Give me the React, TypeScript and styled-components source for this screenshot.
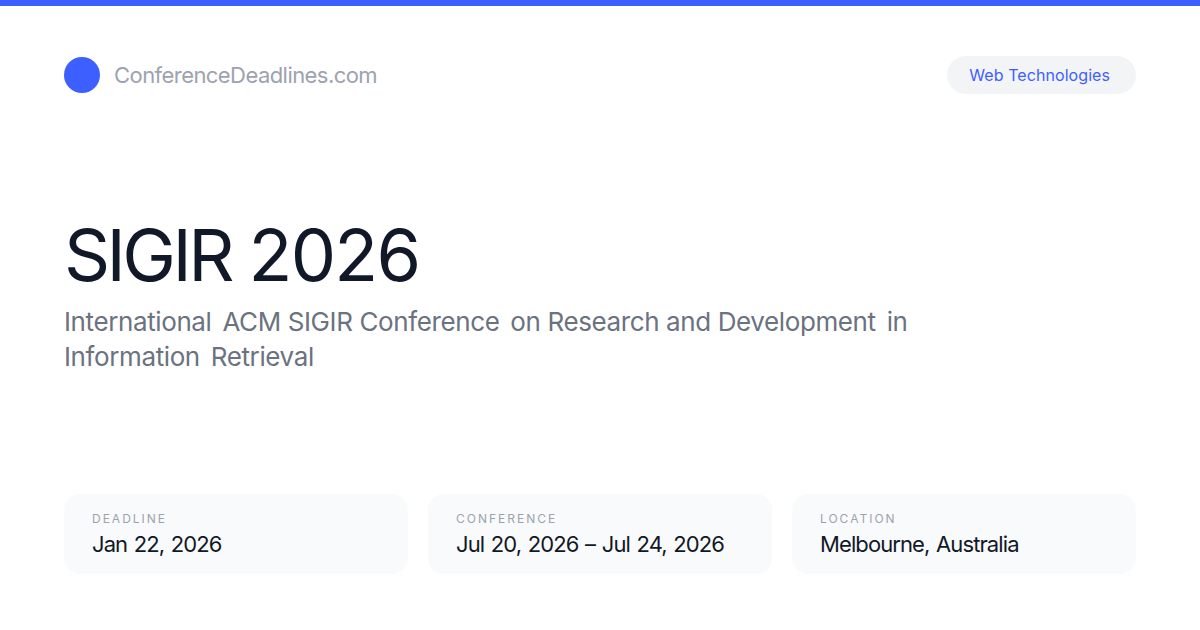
import styled, { createGlobalStyle } from "styled-components";

const GlobalStyle = createGlobalStyle`
  html, body {
    margin: 0;
    padding: 0;
    background: #ffffff;
  }
`;

const Page = styled.div`
  width: 1200px;
  height: 630px;
  box-sizing: border-box;
  overflow: hidden;
  display: flex;
  flex-direction: column;
  border-top: 6px solid #3d5fff;
  padding: 50px 64px 56px;
  font-family: Inter, "Liberation Sans", sans-serif;
`;

const Header = styled.div`
  display: flex;
  align-items: center;
  justify-content: space-between;
`;

const Brand = styled.div`
  display: flex;
  align-items: center;
  gap: 14px;
`;

const Dot = styled.div`
  width: 36px;
  height: 36px;
  border-radius: 50%;
  background: #3d5fff;
`;

const BrandName = styled.span`
  color: #9ca3af;
  font-size: 22px;
  line-height: 38px;
  letter-spacing: -0.56px;
`;

const Tag = styled.span`
  background: #f3f4f6;
  color: #3d5fff;
  font-size: 16px;
  line-height: 38px;
  letter-spacing: 0.07px;
  padding: 0 26px 0 22px;
  border-radius: 19px;
`;

const Main = styled.div`
  flex: 1;
  display: flex;
  flex-direction: column;
  justify-content: center;
`;

const Title = styled.h1`
  margin: 0 0 9px;
  color: #111827;
  font-size: 72px;
  font-weight: 400;
  line-height: 80px;
  letter-spacing: -3.6px;
  word-spacing: 1px;
`;

const Year = styled.span`
  letter-spacing: -1.8px;
`;

const Subtitle = styled.p`
  margin: 0;
  width: 900px;
  color: #6b7280;
  font-size: 26px;
  line-height: 35px;
  letter-spacing: -0.39px;
`;

const WideWord = styled.span`
  margin-right: 4px;
`;

const Cards = styled.div`
  display: grid;
  grid-template-columns: repeat(3, 1fr);
  gap: 20px;
`;

const Card = styled.div`
  height: 80px;
  box-sizing: border-box;
  padding: 17px 28px;
  background: #f9fafb;
  border-radius: 16px;
`;

const Label = styled.div`
  color: #9ca3af;
  font-size: 12px;
  line-height: 16px;
  letter-spacing: 2px;
  text-transform: uppercase;
`;

const Value = styled.div`
  margin-top: 2px;
  color: #111827;
  font-size: 22px;
  line-height: 30px;
  letter-spacing: -0.9px;
  word-spacing: 1.3px;
`;

const details = [
  { label: "Deadline", value: "Jan 22, 2026" },
  { label: "Conference", value: "Jul 20, 2026 – Jul 24, 2026" },
  { label: "Location", value: "Melbourne, Australia" },
];

const App = () => {
  return (
    <Page>
      <GlobalStyle />
      <Header>
        <Brand>
          <Dot />
          <BrandName>ConferenceDeadlines.com</BrandName>
        </Brand>
        <Tag>Web Technologies</Tag>
      </Header>
      <Main>
        <Title>
          SIGIR <Year>2026</Year>
        </Title>
        <Subtitle>
          <WideWord>International</WideWord> ACM SIGIR <WideWord>Conference</WideWord> on Research
          and <WideWord>Development</WideWord> in <WideWord>Information</WideWord> Retrieval
        </Subtitle>
      </Main>
      <Cards>
        {details.map((item) => (
          <Card key={item.label}>
            <Label>{item.label}</Label>
            <Value>{item.value}</Value>
          </Card>
        ))}
      </Cards>
    </Page>
  );
};

export default App;
